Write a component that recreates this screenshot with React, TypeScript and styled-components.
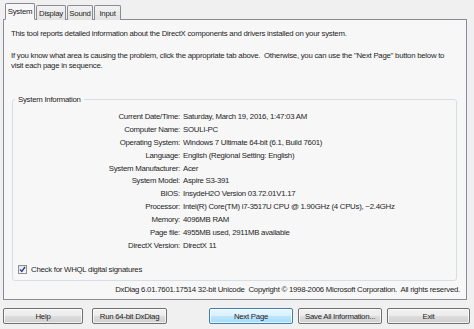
import React from "react";
import styled, { createGlobalStyle } from "styled-components";

const GlobalStyle = createGlobalStyle`
  html, body {
    margin: 0;
    padding: 0;
    background: #f0f0f0;
  }
  body {
    font-family: "Liberation Sans", Arial, sans-serif;
    font-size: 7.8px;
    letter-spacing: -0.25px;
    color: #1e1e1e;
  }
`;

const rows: [string, string][] = [
  ["Current Date/Time:", "Saturday, March 19, 2016, 1:47:03 AM"],
  ["Computer Name:", "SOULI-PC"],
  ["Operating System:", "Windows 7 Ultimate 64-bit (6.1, Build 7601)"],
  ["Language:", "English (Regional Setting: English)"],
  ["System Manufacturer:", "Acer"],
  ["System Model:", "Aspire S3-391"],
  ["BIOS:", "InsydeH2O Version 03.72.01V1.17"],
  ["Processor:", "Intel(R) Core(TM) i7-3517U CPU @ 1.90GHz (4 CPUs), ~2.4GHz"],
  ["Memory:", "4096MB RAM"],
  ["Page file:", "4955MB used, 2911MB available"],
  ["DirectX Version:", "DirectX 11"],
];

const tabs: [string, number][] = [
  ["System", 30],
  ["Display", 30],
  ["Sound", 26],
  ["Input", 27],
];

export default function App() {
  return (
    <>
      <GlobalStyle />
      <Window>
        <TabStrip>
          {tabs.map(([t, w], i) => (
            <Tab key={t} $w={w} $active={i === 0}>
              {t}
            </Tab>
          ))}
        </TabStrip>
        <Panel>
          <Intro $after={12}>
            This tool reports detailed information about the DirectX components and drivers installed on your system.
          </Intro>
          <Intro $after={24}>
            If you know what area is causing the problem, click the appropriate tab above.&nbsp; Otherwise, you can use the "Next Page" button below to
            <br />
            visit each page in sequence.
          </Intro>
          <GroupBox>
            <Legend>System Information</Legend>
            <InfoGrid>
              {rows.map(([k, v]) => (
                <React.Fragment key={k}>
                  <Label>{k}</Label>
                  <Value>{v}</Value>
                </React.Fragment>
              ))}
            </InfoGrid>
            <CheckRow>
              <CheckBox>
                <svg width="7" height="7" viewBox="0 0 7 7">
                  <path d="M1 3.5 L2.8 5.5 L6 1" fill="none" stroke="#2b3f8c" strokeWidth="1.3" />
                </svg>
              </CheckBox>
              Check for WHQL digital signatures
            </CheckRow>
          </GroupBox>
          <Footer>
            DxDiag 6.01.7601.17514 32-bit Unicode&nbsp; Copyright © 1998-2006 Microsoft Corporation.&nbsp; All rights reserved.
          </Footer>
        </Panel>
        <ButtonBar>
          <Button $w={80}>Help</Button>
          <Button $w={75}>Run 64-bit DxDiag</Button>
          <Spacer />
          <Button $w={84} $default>Next Page</Button>
          <Button $w={84}>Save All Information...</Button>
          <Button $w={83}>Exit</Button>
        </ButtonBar>
      </Window>
    </>
  );
}

const Window = styled.div`
  width: 474px;
  height: 329px;
  padding: 3px 4px 0 3px;
  box-sizing: border-box;
  display: flex;
  flex-direction: column;
  background: #f0f0f0;
`;

const TabStrip = styled.div`
  display: flex;
  align-items: flex-end;
  height: 17px;
  padding-left: 2px;
  position: relative;
  z-index: 1;
  margin-bottom: -1px;
`;

const Tab = styled.div<{ $w: number; $active?: boolean }>`
  width: ${(p) => p.$w}px;
  height: ${(p) => (p.$active ? 17 : 15)}px;
  margin-right: 1px;
  display: flex;
  align-items: center;
  justify-content: center;
  box-sizing: border-box;
  border: 1px solid #898c95;
  border-bottom: ${(p) => (p.$active ? "1px solid #f7f7f7" : "none")};
  background: ${(p) => (p.$active ? "#f7f7f7" : "linear-gradient(#f2f2f2, #e3e3e3)")};
  border-radius: 2px 2px 0 0;
`;

const Panel = styled.div`
  height: 281px;
  margin-right: 3px;
  box-sizing: border-box;
  border: 1px solid #898c95;
  background: #f7f7f7;
  padding: 9px 5px 0 7px;
  display: flex;
  flex-direction: column;
`;

const Intro = styled.div<{ $after: number }>`
  line-height: 10px;
  margin-bottom: ${(p) => p.$after}px;
  white-space: nowrap;
`;

const GroupBox = styled.fieldset`
  margin: 0 4px 0 1px;
  padding: 8px 0 8px 0;
  border: 1px solid #d5dfe5;
  border-radius: 3px;
  height: 186px;
  box-sizing: border-box;
`;

const Legend = styled.legend`
  padding: 0 3px;
  margin-left: 2px;
`;

const InfoGrid = styled.div`
  display: grid;
  grid-template-columns: 167px 1fr;
  row-gap: 2.9px;
  line-height: 10px;
`;

const Label = styled.div`
  text-align: right;
`;

const Value = styled.div`
  padding-left: 3px;
`;

const CheckRow = styled.div`
  display: flex;
  align-items: center;
  gap: 4px;
  margin-top: 14px;
  padding-left: 5px;
`;

const CheckBox = styled.div`
  width: 9px;
  height: 9px;
  box-sizing: border-box;
  border: 1px solid #8f8f8f;
  background: linear-gradient(#e4e4e4, #fafafa);
  display: flex;
  align-items: center;
  justify-content: center;
`;

const Footer = styled.div`
  text-align: right;
  margin-top: 4px;
  padding-right: 1px;
`;

const ButtonBar = styled.div`
  display: flex;
  gap: 5px;
  margin-top: 8px;
  & > :nth-child(2) {
    margin-left: 4px;
  }
`;

const Spacer = styled.div`
  flex: 1;
`;

const Button = styled.div<{ $w: number; $default?: boolean }>`
  width: ${(p) => p.$w}px;
  height: 16px;
  box-sizing: border-box;
  display: flex;
  align-items: center;
  justify-content: center;
  border: 1px solid ${(p) => (p.$default ? "#3c7fb1" : "#707070")};
  border-radius: 2px;
  background: ${(p) =>
    p.$default
      ? "linear-gradient(#eaf6fd 0%, #d9f0fc 50%, #bee6fd 51%, #a7d9f5 100%)"
      : "linear-gradient(#f2f2f2 0%, #ebebeb 50%, #dddddd 51%, #cfcfcf 100%)"};
  box-shadow: inset 0 0 0 1px rgba(255, 255, 255, 0.7);
  white-space: nowrap;
`;
